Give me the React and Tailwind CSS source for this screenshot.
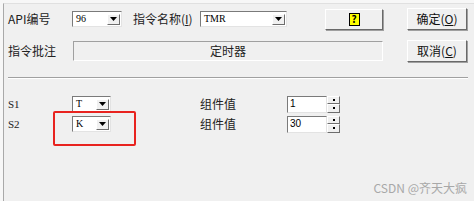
import React from 'react';

const font = { fontFamily: '"Noto Sans CJK SC", "Liberation Sans", sans-serif' };

const Sunken = ({ className = '', children }) => (
    <div className={`flex items-center bg-white border border-t-[#7a7a7a] border-l-[#7a7a7a] border-r-[#e3e3e3] border-b-[#e3e3e3] ${className}`}>
        {children}
    </div>
);

const DropBtn = () => (
    <div className="ml-auto mr-px w-[13px] h-[11px] flex items-center justify-center bg-[#f0f0f0] border border-t-white border-l-white border-r-[#6d6d6d] border-b-[#6d6d6d]">
        <svg width="7" height="4" viewBox="0 0 7 4"><path d="M0 0h7L3.5 4z" fill="#000" /></svg>
    </div>
);

const Combo = ({ value, w }) => (
    <Sunken className={`${w} h-[16px] pl-[3px]`}>
        <span className="text-[10px] leading-none text-black" style={{ fontFamily: '"Liberation Serif", serif' }}>{value}</span>
        <DropBtn />
    </Sunken>
);

const Spin = ({ value }) => (
    <div className="flex items-center">
        <Sunken className="w-[40px] h-[17px] pl-[2px]">
            <span className="text-[10px] leading-none text-black" style={{ fontFamily: '"Liberation Sans", sans-serif' }}>{value}</span>
        </Sunken>
        <div className="flex flex-col w-[13px] h-[17px]">
            <div className="flex-1 flex items-center justify-center bg-[#f0f0f0] border border-t-white border-l-white border-r-[#6d6d6d] border-b-[#6d6d6d]">
                <div className="w-[2px] h-[2px] bg-black" />
            </div>
            <div className="flex-1 flex items-center justify-center bg-[#f0f0f0] border border-t-white border-l-white border-r-[#6d6d6d] border-b-[#6d6d6d]">
                <div className="w-[2px] h-[2px] bg-black" />
            </div>
        </div>
    </div>
);

const Button = ({ children, className = '' }) => (
    <div className={`flex items-center justify-center bg-[#f0f0f0] border border-t-white border-l-white border-r-[#696969] border-b-[#696969] shadow-[1px_1px_0_#a0a0a0] text-[12px] text-[#111] ${className}`}>
        {children}
    </div>
);

const App = () => {
    return (
        <div className="w-[474px] h-[201px] bg-[#f7f7f7] overflow-hidden" style={font}>
            <div className="relative ml-[3px] mt-[3px] h-[198px] bg-[#f0f0f0] border-l border-t border-l-[#a9a9a9] border-t-[#e0e0e0] pl-[4px] text-[12px] text-[#222]">
                {/* row 1 */}
                <div className="flex items-center h-[22px] mt-[4px]">
                    <span className="w-[64px]">API编号</span>
                    <Combo value="96" w="w-[50px]" />
                    <span className="ml-[11px] w-[67px]">指令名称(<u>I</u>)</span>
                    <Combo value="TMR" w="w-[87px]" />
                    <Button className="ml-[38px] w-[58px] h-[21px]">
                        <div className="w-[11px] h-[13px] bg-[#ffff00] border border-black flex items-center justify-center text-[10px] font-bold leading-none text-black">?</div>
                    </Button>
                    <Button className="ml-[24px] w-[60px] h-[22px]">确定(<u>O</u>)</Button>
                </div>
                {/* row 2 */}
                <div className="flex items-center h-[22px] mt-[10px]">
                    <span className="w-[65px]">指令批注</span>
                    <div className="w-[310px] h-[20px] flex items-center justify-center border border-t-[#a0a0a0] border-l-[#a0a0a0] border-r-white border-b-white text-[#222]">定时器</div>
                    <Button className="ml-[24px] w-[60px] h-[22px]">取消(<u>C</u>)</Button>
                </div>
                {/* separator */}
                <div className="mt-[15px] mr-[6px] border-t border-t-[#a0a0a0] border-b border-b-white" />
                {/* S rows */}
                <div className="flex items-center h-[16px] mt-[17px]">
                    <span className="w-[64px] text-[11px]" style={{ fontFamily: '"Liberation Serif", serif' }}>S1</span>
                    <Combo value="T" w="w-[39px]" />
                    <span className="ml-[89px] w-[87px]">组件值</span>
                    <Spin value="1" />
                </div>
                <div className="flex items-center h-[16px] mt-[4px]">
                    <span className="w-[64px] text-[11px]" style={{ fontFamily: '"Liberation Serif", serif' }}>S2</span>
                    <Combo value="K" w="w-[39px]" />
                    <span className="ml-[89px] w-[87px]">组件值</span>
                    <Spin value="30" />
                </div>
                {/* red highlight */}
                <div className="absolute left-[49px] top-[107px] w-[83px] h-[35px] border-2 border-[#e8231f] rounded-[2px]" />
                {/* watermark */}
                <div className="absolute right-[7px] bottom-[4px] text-[12px] text-[#a8a8a8]">CSDN @齐天大疯</div>
            </div>
        </div>
    );
};

export default App;
